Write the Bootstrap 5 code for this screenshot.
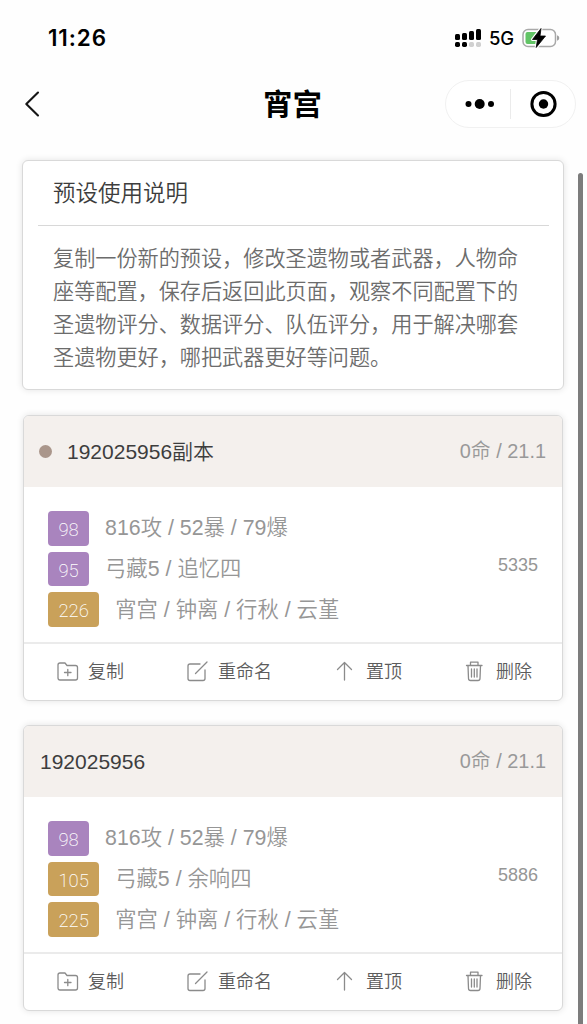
<!DOCTYPE html>
<html lang="zh-CN">
<head>
<meta charset="utf-8">
<meta name="viewport" content="width=device-width, initial-scale=1">
<title>宵宫</title>
<link href="https://cdn.jsdelivr.net/npm/bootstrap@5.3.0/dist/css/bootstrap.min.css" rel="stylesheet">
<style>
  body { background: #fefefe; font-family: "Liberation Sans", "Noto Sans CJK SC", sans-serif; color: #3d3d3d; height: 1024px; overflow: hidden; }
  svg { display: block; flex: none; }
  .status { height: 76px; padding: 0 27px 0 48px; color: #000; font-family: Inter, sans-serif; }
  .clock { font-size: 22.4px; font-weight: 600; letter-spacing: .9px; }
  .network { font-size: 18.5px; font-weight: 500; margin: 1px 8px 0 7px; letter-spacing: -.1px; }
  .titlebar { height: 84px; padding: 4px 11px 32px 24px; color: #000; }
  .titlebar h1 { font-size: 29.5px; line-height: 50px; font-weight: 700; margin: 2px 0 0 -1px; }
  .capsule { width: 131px; height: 48px; border: 1px solid #f1f1f1; border-radius: 24px; background: #fff; }
  .panel { --bs-card-border-color: #d9d9d9; --bs-card-border-width: 1.5px; --bs-card-border-radius: 6px; --bs-card-inner-border-radius: 5px; --bs-card-bg: #fff; --bs-card-color: #3d3d3d; box-shadow: 0 0 7px rgba(0,0,0,.11); }
  .guide { margin: 0 23px 25px 22px; height: 230px; padding: 0 14.5px; }
  .guide h2 { font-size: 22.5px; line-height: 66px; font-weight: 350; padding-left: 15.5px; border-bottom: 1.5px solid #d8d8d8; height: 65px; }
  .guide p { font-size: 21.15px; line-height: 33.2px; font-weight: 350; color: #6c6c6c; padding: 15.5px 10px 0 15.5px; }
  .preset { margin: 0 24px 24.5px 23px; height: 286px; }
  .preset + .preset { margin-top: -.5px; }
  .preset-head { height: 71px; background: #f4f0ed; border-radius: 5px 5px 0 0; padding: 0 16px; font-size: 21px; font-weight: 350; }
  .dot { width: 13px; height: 13px; border-radius: 50%; background: #aa968b; margin: 0 15px 0 -1px; }
  .rank { font-size: 19.9px; color: #999; font-weight: 350; }
  .preset-body { height: 155px; padding: 24px 24px 0; font-size: 21.35px; font-weight: 350; color: #969696; }
  .line { height: 34.7px; }
  .score { height: 34.5px; border-radius: 4px; padding: 2px 10.4px 0; font-family: Roboto, sans-serif; font-weight: 200; font-size: 18.4px; line-height: 33px; color: #fff; margin-right: 16px; }
  .purple { background: #a984be; }
  .gold { background: #c9a15a; }
  .damage { font-size: 18px; padding-bottom: 23px; }
  .actions { border-top: 2.5px solid #ebebeb; padding: 1px 30px 0 32px; }
  .actions button { font-size: 18px; line-height: 27px; color: #5c5c5c; font-weight: 350; }
  .actions svg { stroke: #8b8b8b; fill: none; stroke-width: 1.3; stroke-linecap: round; stroke-linejoin: round; margin: -1px 8.5px 0 -.5px; }
  .scroll-thumb { position: absolute; left: 578px; top: 173px; width: 4.5px; height: 860px; border-radius: 3px; background: #7c7c7c; }
</style>
</head>
<body class="position-relative">
<header>
  <div class="status d-flex align-items-center">
    <span class="clock me-auto">11:26</span>
    <svg width="27" height="20" viewBox="0 0 27 20">
      <g fill="#000"><rect x="0" y="6" width="5" height="6" rx="1.5"/><rect x="7" y="5" width="5" height="7" rx="1.5"/><rect x="14" y="3" width="5" height="9" rx="1.5"/><rect x="21" y="1" width="5" height="11" rx="1.5"/><rect x="0" y="14" width="5" height="5" rx="1.7"/><rect x="7" y="14" width="5" height="5" rx="1.7"/></g>
      <g fill="#d0d0d0"><rect x="14" y="14" width="5" height="5" rx="1.7"/><rect x="21" y="14" width="5" height="5" rx="1.7"/></g>
    </svg>
    <span class="network">5G</span>
    <svg width="38" height="22" viewBox="0 0 38 22">
      <rect x="1" y="2.5" width="32.5" height="17" rx="5" fill="#fff" stroke="#a9a9a9" stroke-width="1.5"/>
      <path d="M5.500 5H17v12H5.500Q3.500 17 3.500 15V7Q3.500 5 5.500 5Z" fill="#62c466"/>
      <path d="M35 8.300Q37.300 9 37.300 11T35 13.700Z" fill="#a0a0a0"/>
      <path d="M19 1.500 10.500 12.500H15.500L14.200 20.500 23.500 9H18Z" fill="none" stroke="#fff" stroke-width="3" stroke-linejoin="round"/>
      <path d="M19 1.500 10.500 12.500H15.500L14.200 20.500 23.500 9H18Z" fill="#000" stroke="#000" stroke-width=".8" stroke-linejoin="round"/>
    </svg>
  </div>
  <div class="titlebar d-flex align-items-center justify-content-between position-relative">
    <svg width="16" height="26" viewBox="0 0 16 26" fill="none" stroke="#161616" stroke-width="2.100" stroke-linecap="round" stroke-linejoin="round"><path d="M14 1.500 2.300 13 14 24.500"/></svg>
    <h1 class="position-absolute start-50 translate-middle-x">宵宫</h1>
    <div class="capsule d-flex align-items-center">
      <svg width="129" height="46" viewBox="0 0 129 46">
        <circle cx="22.500" cy="23" r="3"/><circle cx="33.700" cy="23" r="5"/><circle cx="45" cy="23" r="3"/>
        <path d="M64.500 8V38" stroke="#ebebeb"/>
        <circle cx="97.500" cy="23" r="11.600" fill="none" stroke="#000" stroke-width="3"/><circle cx="97.500" cy="23" r="4.700"/>
      </svg>
    </div>
  </div>
</header>

<main>
  <section class="card panel guide">
    <h2 class="m-0">预设使用说明</h2>
    <p class="m-0 text-nowrap">复制一份新的预设，修改圣遗物或者武器，人物命<br>座等配置，保存后返回此页面，观察不同配置下的<br>圣遗物评分、数据评分、队伍评分，用于解决哪套<br>圣遗物更好，哪把武器更好等问题。</p>
  </section>

  <section class="card panel preset">
    <div class="preset-head d-flex align-items-center">
      <span class="dot"></span><span class="me-auto">192025956副本</span><span class="rank">0命 / 21.1</span>
    </div>
    <div class="preset-body d-flex align-items-center justify-content-between">
      <div class="d-flex flex-column align-self-start" style="gap:6px">
        <div class="line d-flex align-items-center"><span class="score purple">98</span>816攻 / 52暴 / 79爆</div>
        <div class="line d-flex align-items-center"><span class="score purple">95</span>弓藏5 / 追忆四</div>
        <div class="line d-flex align-items-center"><span class="score gold">226</span>宵宫 / 钟离 / 行秋 / 云堇</div>
      </div>
      <span class="damage">5335</span>
    </div>
    <div class="actions d-flex justify-content-between align-items-center flex-fill">
      <button class="btn p-0 border-0 d-flex align-items-center"><svg width="24" height="24" viewBox="0 0 24 24"><path d="M2 18V5Q2 3 4 3H9L11 5.500H19.500Q21.500 5.500 21.500 7.500V18Q21.500 20 19.500 20H4Q2 20 2 18ZM8.500 12.500H15M11.800 9.300V15.700"/></svg>复制</button>
      <button class="btn p-0 border-0 d-flex align-items-center"><svg width="24" height="24" viewBox="0 0 24 24"><path d="M14 4H4Q2 4 2 6V18.500Q2 20.500 4 20.500H17Q19 20.500 19 18.500V10M9.500 13.500 21 2"/></svg>重命名</button>
      <button class="btn p-0 border-0 d-flex align-items-center"><svg width="24" height="24" viewBox="0 0 24 24"><path d="M10.500 20V2.500M3.500 9.500 10.500 2.500 17.500 9.500"/></svg>置顶</button>
      <button class="btn p-0 border-0 d-flex align-items-center"><svg width="24" height="24" viewBox="0 0 24 24"><path d="M2.500 5.500H18M6.500 5V2.200H14V5M4 5.800 4.500 18.500Q4.600 20.500 6.500 20.500H14Q15.900 20.500 16 18.500L16.500 5.800M7.500 9V17M10.300 9V17M13 9V17"/></svg>删除</button>
    </div>
  </section>

  <section class="card panel preset">
    <div class="preset-head d-flex align-items-center">
      <span class="me-auto">192025956</span><span class="rank">0命 / 21.1</span>
    </div>
    <div class="preset-body d-flex align-items-center justify-content-between">
      <div class="d-flex flex-column align-self-start" style="gap:6px">
        <div class="line d-flex align-items-center"><span class="score purple">98</span>816攻 / 52暴 / 79爆</div>
        <div class="line d-flex align-items-center"><span class="score gold">105</span>弓藏5 / 余响四</div>
        <div class="line d-flex align-items-center"><span class="score gold">225</span>宵宫 / 钟离 / 行秋 / 云堇</div>
      </div>
      <span class="damage">5886</span>
    </div>
    <div class="actions d-flex justify-content-between align-items-center flex-fill">
      <button class="btn p-0 border-0 d-flex align-items-center"><svg width="24" height="24" viewBox="0 0 24 24"><path d="M2 18V5Q2 3 4 3H9L11 5.500H19.500Q21.500 5.500 21.500 7.500V18Q21.500 20 19.500 20H4Q2 20 2 18ZM8.500 12.500H15M11.800 9.300V15.700"/></svg>复制</button>
      <button class="btn p-0 border-0 d-flex align-items-center"><svg width="24" height="24" viewBox="0 0 24 24"><path d="M14 4H4Q2 4 2 6V18.500Q2 20.500 4 20.500H17Q19 20.500 19 18.500V10M9.500 13.500 21 2"/></svg>重命名</button>
      <button class="btn p-0 border-0 d-flex align-items-center"><svg width="24" height="24" viewBox="0 0 24 24"><path d="M10.500 20V2.500M3.500 9.500 10.500 2.500 17.500 9.500"/></svg>置顶</button>
      <button class="btn p-0 border-0 d-flex align-items-center"><svg width="24" height="24" viewBox="0 0 24 24"><path d="M2.500 5.500H18M6.500 5V2.200H14V5M4 5.800 4.500 18.500Q4.600 20.500 6.500 20.500H14Q15.900 20.500 16 18.500L16.500 5.800M7.500 9V17M10.300 9V17M13 9V17"/></svg>删除</button>
    </div>
  </section>
</main>
<div class="scroll-thumb"></div>
<script src="https://cdn.jsdelivr.net/npm/bootstrap@5.3.0/dist/js/bootstrap.bundle.min.js"></script>
</body>
</html>
